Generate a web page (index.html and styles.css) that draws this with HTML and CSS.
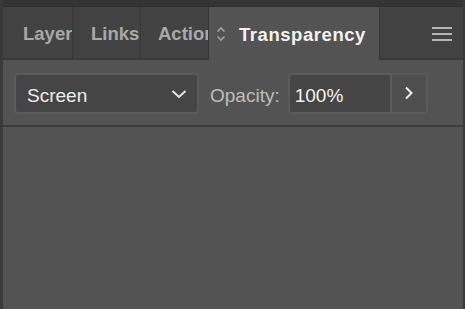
FILE: index.html
```html
<!DOCTYPE html>
<html>
<head>
<meta charset="utf-8">
<link rel="stylesheet" href="styles.css">
</head>
<body>
<div class="panel">
  <div class="topbar"></div>
  <div class="tabs">
    <div class="tab t1"><span>Layers</span></div>
    <div class="tab t2"><span>Links</span></div>
    <div class="tab t3"><span>Actions</span></div>
    <div class="tab active">
      <svg class="updown" width="10" height="16" viewBox="0 0 10 16"><path d="M1.5 5.5 L5 2 L8.5 5.5 M1.5 10.5 L5 14 L8.5 10.5" fill="none" stroke="#a3a3a3" stroke-width="1.6"/></svg>
      <span class="title">Transparency</span>
    </div>
    <div class="tabrest">
      <div class="menu"><i></i><i></i><i></i></div>
    </div>
  </div>
  <div class="controls">
    <div class="select">
      <span class="txt">Screen</span>
      <svg width="16" height="10" viewBox="0 0 16 10"><path d="M1.5 2 L8 8 L14.5 2" fill="none" stroke="#e6e6e6" stroke-width="2"/></svg>
    </div>
    <span class="label">Opacity:</span>
    <div class="field">
      <div class="value"><span class="txt">100%</span></div>
      <div class="btn"><svg width="10" height="14" viewBox="0 0 10 14"><path d="M2 1.5 L7.5 7 L2 12.5" fill="none" stroke="#ececec" stroke-width="2"/></svg></div>
    </div>
  </div>
  <div class="body"></div>
</div>
</body>
</html>
```
FILE: styles.css
```css
html, body { margin: 0; padding: 0; }
body { width: 465px; height: 309px; overflow: hidden; background: #333; font-family: "Liberation Sans", Arial, sans-serif; }
.panel { display: flex; flex-direction: column; height: 309px; border-left: 3px solid #393939; border-right: 2px solid #393939; box-sizing: border-box; background: #535353; }
.topbar { height: 6px; background: #343434; border-bottom: 1px solid #2f2f2f; }
.tabs { display: flex; height: 53px; background: #424242; }
.tab { display: flex; align-items: center; overflow: hidden; white-space: nowrap; box-sizing: border-box; border-right: 1px solid #363636; border-bottom: 2px solid #393939; color: #a9a9a9; font-weight: bold; font-size: 18.5px; padding-top: 2px; }
.t1 { width: 70px; padding-left: 20px; }
.t2 { width: 68px; padding-left: 18px; }
.t3 { width: 68px; padding-left: 17px; }
.tab.active { width: 171px; background: #535353; color: #f2f2f2; border-bottom: none; padding-left: 7px; border-right: 1px solid #373737; }
.title { letter-spacing: 0.55px; }
.updown { margin-right: 13px; margin-top: -1px; }
.tabrest { flex: 1; display: flex; justify-content: flex-end; align-items: center; border-bottom: 2px solid #393939; padding-right: 11px; }
.menu { display: flex; flex-direction: column; gap: 4px; margin-top: 2px; }
.menu i { display: block; width: 20px; height: 2px; background: #b4b4b4; }
.controls { display: flex; align-items: center; height: 67px; padding: 1px 0 0 11px; border-bottom: 2px solid #3b3b3b; box-sizing: border-box; }
.select { display: flex; align-items: center; justify-content: space-between; width: 185px; height: 41px; box-sizing: border-box; background: #454545; border: 2px solid #5a5a5a; border-radius: 4px; padding: 0 10px 0 11px; color: #ececec; font-size: 19px; }
.txt { padding-top: 5px; }
.select svg { margin-top: 1px; }
.label { color: #bdbdbd; font-size: 19px; margin-left: 11px; padding-top: 5px; }
.field { display: flex; margin-left: 8px; width: 140px; height: 41px; box-sizing: border-box; border: 2px solid #5a5a5a; border-radius: 4px; overflow: hidden; }
.value { width: 100px; background: #454545; color: #f2f2f2; font-size: 19px; display: flex; align-items: center; padding-left: 5px; box-sizing: border-box; }
.btn { flex: 1; border-left: 2px solid #5a5a5a; display: flex; align-items: center; justify-content: center; background: #4e4e4e; }
.body { flex: 1; }
```
